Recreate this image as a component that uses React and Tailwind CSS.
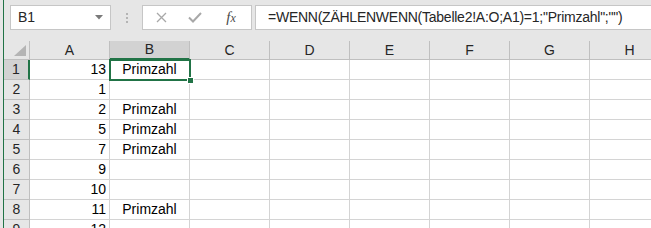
import React from "react";

const COLS = ["A", "B", "C", "D", "E", "F", "G", "H"];
const ROWS = [
  [1, "13", "Primzahl"],
  [2, "1", ""],
  [3, "2", "Primzahl"],
  [4, "5", "Primzahl"],
  [5, "7", "Primzahl"],
  [6, "9", ""],
  [7, "10", ""],
  [8, "11", "Primzahl"],
  [9, "12", ""],
];

const font = { fontFamily: "'Liberation Sans', Arial, sans-serif" };

export default function App() {
  return (
    <div className="w-[651px] h-[228px] overflow-hidden bg-[#e6e6e6] flex" style={font}>
      <div className="w-[3px] shrink-0" />
      <div className="w-px shrink-0 bg-[#217346]" />
      <div className="flex-1 min-w-0 flex flex-col">
        {/* formula bar */}
        <div className="h-[41px] shrink-0 flex items-start pt-[5px]">
          <div className="ml-[6px] w-[101px] h-[25px] bg-white border border-[#c6c6c6] flex items-center justify-between pl-[7px] pr-[7px]">
            <span className="text-[14px] text-[#262626]">B1</span>
            <svg width="8" height="5" viewBox="0 0 8 5">
              <polygon points="0,0 8,0 4,4.5" fill="#7a7a7a" />
            </svg>
          </div>
          <div className="w-[31px] h-[25px] flex flex-col items-center justify-center gap-[2px]">
            <span className="w-[2px] h-[2px] bg-[#b4b4b4]" />
            <span className="w-[2px] h-[2px] bg-[#b4b4b4]" />
            <span className="w-[2px] h-[2px] bg-[#b4b4b4]" />
          </div>
          <div className="w-[110px] h-[25px] bg-white border border-[#c6c6c6] flex items-center">
            <div className="w-[36px] flex justify-center">
              <svg width="11" height="11" viewBox="0 0 11 11">
                <path d="M1 1 L10 10 M10 1 L1 10" stroke="#a8a8a8" strokeWidth="1.3" fill="none" />
              </svg>
            </div>
            <div className="w-[32px] flex justify-center">
              <svg width="14" height="11" viewBox="0 0 14 11">
                <path d="M1 5.5 L5 9.5 L13 1" stroke="#a8a8a8" strokeWidth="2" fill="none" />
              </svg>
            </div>
            <div className="flex-1 flex justify-center">
              <span
                className="italic text-[15px] text-[#4a4a4a] leading-none"
                style={{ fontFamily: "'Liberation Serif', 'Times New Roman', serif" }}
              >
                f<span className="text-[12px]">x</span>
              </span>
            </div>
          </div>
          <div className="ml-[3px] flex-1 h-[25px] bg-white border border-r-0 border-[#c6c6c6] flex items-center pl-[12px]">
            <span className="text-[14px] text-[#262626] whitespace-nowrap tracking-[-0.25px]">
              =WENN(ZÄHLENWENN(Tabelle2!A:O;A1)=1;"Primzahl";"")
            </span>
          </div>
        </div>

        {/* grid */}
        <div className="relative bg-white">
          <div className="grid grid-cols-[26px_repeat(8,80px)] grid-rows-[19px_repeat(9,20px)]">
            <div className="bg-[#e6e6e6] border-r border-b border-[#bfbfbf] flex items-end justify-end pr-[3px] pb-[3px]">
              <svg width="12" height="11" viewBox="0 0 12 11">
                <polygon points="12,0 12,11 0,11" fill="#b4b4b4" />
              </svg>
            </div>
            {COLS.map((c) =>
              c === "B" ? (
                <div
                  key={c}
                  className="bg-[#d2d2d2] border-r border-[#bfbfbf] border-b-2 border-b-[#217346] flex items-center justify-center text-[14px] text-[#262626]"
                >
                  {c}
                </div>
              ) : (
                <div
                  key={c}
                  className="bg-[#e6e6e6] border-r border-b border-[#bfbfbf] flex items-center justify-center text-[14px] text-[#262626]"
                >
                  {c}
                </div>
              )
            )}
            {ROWS.map(([n, a, b]) => (
              <React.Fragment key={n}>
                {n === 1 ? (
                  <div className="bg-[#d2d2d2] border-b border-[#bfbfbf] border-r-2 border-r-[#217346] flex items-center justify-center text-[14px] text-[#262626]">
                    {n}
                  </div>
                ) : (
                  <div className="bg-[#e6e6e6] border-r border-b border-[#bfbfbf] flex items-center justify-center text-[14px] text-[#262626]">
                    {n}
                  </div>
                )}
                <div className="border-r border-b border-[#d4d4d4] flex items-center justify-end pr-[3px] text-[14px] text-black">
                  {a}
                </div>
                <div className="border-r border-b border-[#d4d4d4] flex items-center justify-center text-[14px] text-black">
                  {b}
                </div>
                {COLS.slice(2).map((c) => (
                  <div key={c} className="border-r border-b border-[#d4d4d4]" />
                ))}
              </React.Fragment>
            ))}
          </div>
          {/* active cell */}
          <div className="absolute left-[105px] top-[18px] w-[82px] h-[22px] border-2 border-[#217346] pointer-events-none" />
          <div className="absolute left-[183px] top-[36px] w-[7px] h-[7px] bg-[#217346] border border-white" />
        </div>
      </div>
    </div>
  );
}
